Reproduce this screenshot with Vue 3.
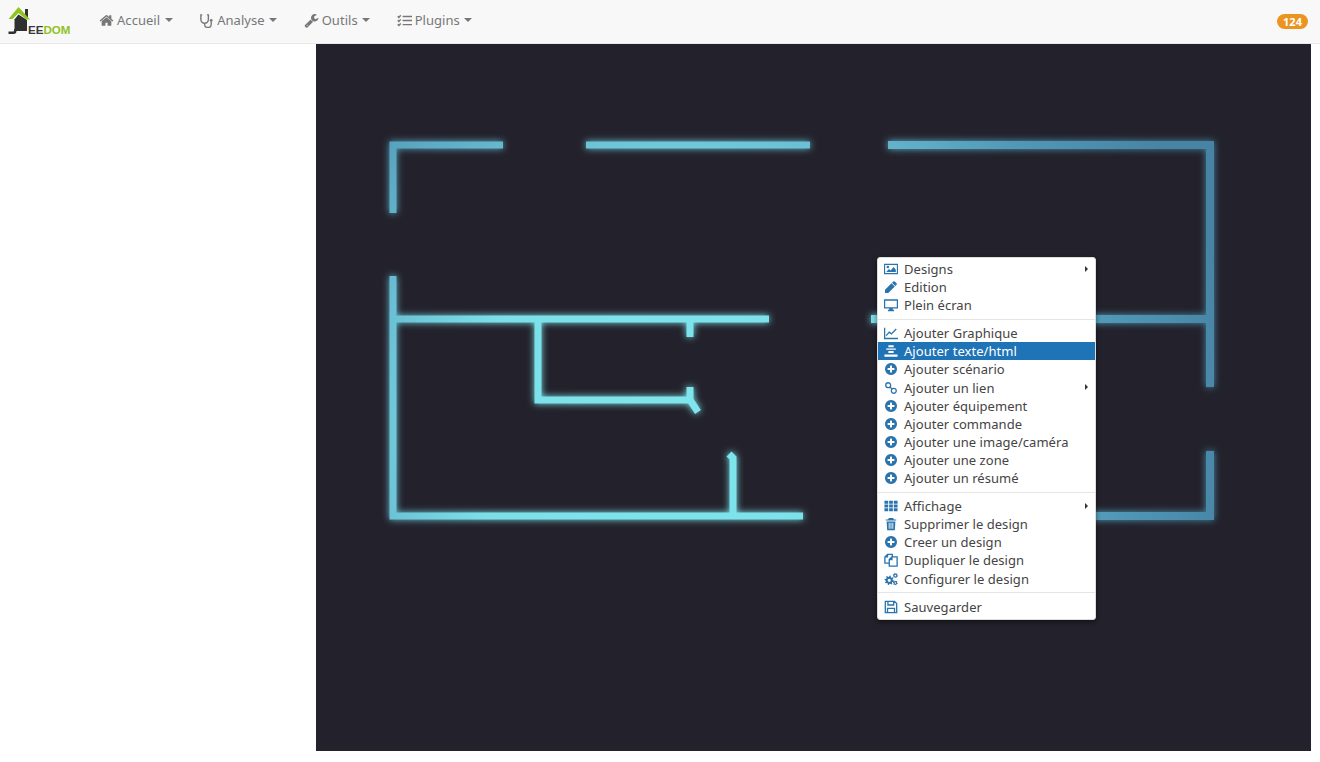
<template>
  <div class="page">
    <header class="navbar">
      <a class="logo">
        <svg width="72" height="36" viewBox="0 0 72 36">
          <rect x="25" y="9" width="3" height="8" fill="#2f3030" />
          <path d="M14 20l4.500-5.500 8.500 5.500v11H14z" fill="#2f3030" />
          <path d="M8.500 19L18.500 7 30 19.500h-3.500l-8-6.500-6 6z" fill="#8fc31f" />
          <path d="M14.500 20h2v11q0 3-3 3H8.500v-2.500h4q2 0 2-1.500z" fill="#2f3030" />
          <rect x="12.500" y="20" width="2" height="9" fill="#f8f8f8" />
          <text x="28" y="34" class="logo-text"><tspan fill="#3a3a3a">EE</tspan><tspan fill="#8fc31f">DOM</tspan></text>
        </svg>
      </a>
      <nav class="nav">
        <a v-for="item in navItems" :key="item.label" class="nav-link">
          <svg class="nav-icon" :viewBox="icons[item.icon].vb || '0 0 16 16'">
            <path v-if="icons[item.icon].fill" :d="icons[item.icon].fill" fill="currentColor" fill-rule="evenodd" />
            <path v-if="icons[item.icon].stroke" :d="icons[item.icon].stroke" fill="none" stroke="currentColor" stroke-width="1.500" />
          </svg>
          <span>{{ item.label }}</span>
          <i class="caret"></i>
        </a>
      </nav>
      <span class="badge">124</span>
    </header>

    <main class="content">
      <div class="side"></div>
      <section class="plan">
        <svg class="walls" viewBox="316 44 995 707" width="995" height="707">
          <defs>
            <radialGradient id="wall" gradientUnits="userSpaceOnUse" cx="680" cy="430" r="560">
              <stop offset="0" stop-color="#7fe6ee" />
              <stop offset="0.38" stop-color="#7bdfe8" />
              <stop offset="0.6" stop-color="#66b8cf" />
              <stop offset="0.78" stop-color="#5199b7" />
              <stop offset="1" stop-color="#4784a4" />
            </radialGradient>
            <filter id="glow" filterUnits="userSpaceOnUse" x="316" y="44" width="995" height="707">
              <feGaussianBlur in="SourceGraphic" stdDeviation="3.500" result="blur" />
              <feMerge>
                <feMergeNode in="blur" />
                <feMergeNode in="SourceGraphic" />
              </feMerge>
            </filter>
          </defs>
          <g filter="url(#glow)" fill="none" stroke="url(#wall)">
            <polyline v-for="(w, i) in walls" :key="i" :points="w" stroke-width="7" />
            <polyline v-for="(w, i) in wideWalls" :key="i" :points="w" stroke-width="8" />
          </g>
        </svg>

        <ul class="menu">
          <template v-for="(item, i) in menuItems" :key="i">
            <li v-if="item.sep" class="sep"></li>
            <li v-else class="menu-item" :class="{ active: item.active }">
              <svg class="menu-icon" :viewBox="icons[item.icon].vb || '0 0 16 16'">
                <path v-if="icons[item.icon].fill" :d="icons[item.icon].fill" fill="currentColor" fill-rule="evenodd" />
                <path v-if="icons[item.icon].stroke" :d="icons[item.icon].stroke" fill="none" stroke="currentColor" stroke-width="1.500" />
              </svg>
              <span>{{ item.label }}</span>
              <i v-if="item.sub" class="sub-arrow"></i>
            </li>
          </template>
        </ul>
      </section>
    </main>
  </div>
</template>

<script setup>
// petit engrenage : polygone a dents avec un trou au centre
const gear = (cx, cy, r, hole, teeth) => {
  const pts = [];
  const n = teeth * 4;
  for (let i = 0; i < n; i++) {
    const a = (i + 0.5) / n * Math.PI * 2;
    const rad = i % 4 < 2 ? r : r * 0.72;
    pts.push(`${(cx + Math.cos(a) * rad).toFixed(2)} ${(cy + Math.sin(a) * rad).toFixed(2)}`);
  }
  return `M${pts.join('L')}zM${cx - hole} ${cy}a${hole} ${hole} 0 1 0 ${hole * 2} 0a${hole} ${hole} 0 1 0 ${-hole * 2} 0z`;
};

const icons = {
  home: {
    vb: '0 0 1792 1792',
    fill: 'M1472 992v480q0 26-19 45t-45 19h-384v-384h-256v384h-384q-26 0-45-19t-19-45v-480q0-1 .5-3t.5-3l575-474 575 474q1 2 1 6zm223-69l-62 74q-8 9-21 11h-3q-13 0-21-7l-692-577-692 577q-12 8-24 7-13-2-21-11l-62-74q-8-10-7-23.500t11-21.500l719-599q32-26 76-26t76 26l244 204v-195q0-14 9-23t23-9h192q14 0 23 9t9 23v408l219 182q10 8 11 21.500t-7 23.500z'
  },
  wrench: {
    vb: '0 0 1792 1792',
    fill: 'M448 1472q0-26-19-45t-45-19-45 19-19 45 19 45 45 19 45-19 19-45zm644-420l-682 682q-37 37-90 37-52 0-91-37l-106-108q-38-36-38-90 0-53 38-91l681-681q39 98 114.500 173.500t173.500 114.500zm634-435q0 39-23 106-47 134-164.500 217.500t-258.500 83.500q-185 0-316.500-131.500t-131.500-316.500 131.500-316.500 316.500-131.500q58 0 121.500 16.500t107.500 46.500q16 11 16 28t-16 28l-293 169v224l193 107q5-3 79-48.500t135.500-81 70.500-35.500q15 0 23.500 10t8.500 25z'
  },
  pencil: {
    vb: '0 0 1792 1792',
    fill: 'M960 416l416 416-832 832h-416v-416zm683 96q0 53-37 90l-166 166-416-416 166-165q36-38 90-38 53 0 91 38l235 234q37 39 37 91z'
  },
  plus: {
    vb: '0 0 1792 1792',
    fill: 'M1344 960v-128q0-26-19-45t-45-19h-256v-256q0-26-19-45t-45-19h-128q-26 0-45 19t-19 45v256h-256q-26 0-45 19t-19 45v128q0 26 19 45t45 19h256v256q0 26 19 45t45 19h128q26 0 45-19t19-45v-256h256q26 0 45-19t19-45zm320-64q0 209-103 385.500t-279.500 279.500-385.500 103-385.500-103-279.500-279.500-103-385.500 103-385.500 279.500-279.500 385.500-103 385.500 103 279.500 279.500 103 385.500z'
  },
  stethoscope: {
    stroke: 'M3.500 2H2v5a4 4 0 0 0 8 0V2H8.500M6 11v1a3.500 3.500 0 0 0 7 0V9.500',
    fill: 'M11.500 8a1.500 1.500 0 1 0 3 0a1.500 1.500 0 1 0-3 0z'
  },
  tasks: {
    fill: 'M6 3h10v1.400H6zM6 7.300h10v1.400H6zM6 11.600h10V13H6z',
    stroke: 'M.8 3.500l1.200 1.200L4 2.500M.8 7.800L2 9l2-2.200M.8 12.100l1.200 1.200 2-2.200'
  },
  picture: {
    fill: 'M0 2h16v12H0zM1.300 3.300v9.400h13.400V3.300zM2.500 11.500l3.200-3.600 1.800 1.800L11 5.800l2.500 3v2.700zM3 5.600a1.400 1.400 0 1 0 2.800 0a1.400 1.400 0 1 0-2.800 0z'
  },
  desktop: {
    fill: 'M0 1.500h16V12H10v1.500h1.500V15h-7v-1.500H6V12H0zM1.400 3v7.500h13.200V3z'
  },
  chart: {
    stroke: 'M.7 2v12.300H16M2.500 11l3.500-4 2.500 2L14 3.500'
  },
  align: {
    fill: 'M5 1.500h6v2.200H5zM2.500 5h11v1.600h-11zM5 8h6v2.200H5zM.5 12h15v2.500H.5z'
  },
  link: {
    stroke: 'M2 4.800a2.800 2.800 0 1 0 5.600 0a2.800 2.800 0 1 0-5.600 0zM8.400 11.200a2.800 2.800 0 1 0 5.600 0a2.800 2.800 0 1 0-5.600 0zM6.500 6.500l3 3'
  },
  grid: {
    fill: 'M.5 2h4.300v3.300H.5zM5.900 2h4.200v3.300H5.900zM11.200 2h4.300v3.300h-4.300zM.5 6.400h4.300v3.200H.5zM5.900 6.400h4.200v3.200H5.900zM11.200 6.400h4.300v3.200h-4.300zM.5 10.700h4.300V14H.5zM5.900 10.700h4.200V14H5.900zM11.200 10.700h4.300V14h-4.300z'
  },
  trash: {
    fill: 'M5.500 1h5l.8 1.800H14V4H2V2.800h2.700zM3 5h10l-.6 10H3.600zM5.400 6.500v7h1v-7zM7.500 6.500v7h1v-7zM9.600 6.500v7h1v-7z'
  },
  copy: {
    stroke: 'M6 11.500H1V4.500l3-3h5.500v3M6 11.500V7.500l3-3h6v10.500H6zM4 1.500v3H1M9 4.500v3H6'
  },
  cogs: {
    fill: gear(6, 9.500, 5.500, 1.800, 8) + gear(13, 4, 3, 1, 6) + gear(13, 12.500, 2.800, 0.9, 6)
  },
  save: {
    stroke: 'M1.500 1.500H12l2.500 2.500v10.500h-13zM4.500 1.500v4.200h6.500V1.500M4 14.500V9.500h8v5'
  }
};

const navItems = [
  { label: 'Accueil', icon: 'home' },
  { label: 'Analyse', icon: 'stethoscope' },
  { label: 'Outils', icon: 'wrench' },
  { label: 'Plugins', icon: 'tasks' }
];

const menuItems = [
  { label: 'Designs', icon: 'picture', sub: true },
  { label: 'Edition', icon: 'pencil' },
  { label: 'Plein écran', icon: 'desktop' },
  { sep: true },
  { label: 'Ajouter Graphique', icon: 'chart' },
  { label: 'Ajouter texte/html', icon: 'align', active: true },
  { label: 'Ajouter scénario', icon: 'plus' },
  { label: 'Ajouter un lien', icon: 'link', sub: true },
  { label: 'Ajouter équipement', icon: 'plus' },
  { label: 'Ajouter commande', icon: 'plus' },
  { label: 'Ajouter une image/caméra', icon: 'plus' },
  { label: 'Ajouter une zone', icon: 'plus' },
  { label: 'Ajouter un résumé', icon: 'plus' },
  { sep: true },
  { label: 'Affichage', icon: 'grid', sub: true },
  { label: 'Supprimer le design', icon: 'trash' },
  { label: 'Creer un design', icon: 'plus' },
  { label: 'Dupliquer le design', icon: 'copy' },
  { label: 'Configurer le design', icon: 'cogs' },
  { sep: true },
  { label: 'Sauvegarder', icon: 'save' }
];

// murs du plan, en coordonnees de la page
const walls = [
  '393,213 393,145 503,145',
  '586,145 810,145',
  '393,276 393,516 803,516',
  '393,319 769,319',
  '538,319 538,400 691,400',
  '690,319 690,337',
  '690,387 690,400 698,412',
  '733,516 733,458 729,454'
];

const wideWalls = [
  '888,145 1210,145 1210,387',
  '1210,451 1210,516 1090,516',
  '871,319 1210,319'
];
</script>

<style scoped>
.page {
  font-family: "Noto Sans", sans-serif;
  font-size: 13px;
  letter-spacing: 0.04px;
  color: #444;
}
.navbar {
  height: 43px;
  display: flex;
  align-items: flex-start;
  background: #f8f8f8;
  border-bottom: 1px solid #e7e7e7;
}
.logo {
  width: 84px;
  flex: none;
}
.logo svg {
  display: block;
}
.logo-text {
  font-family: "Liberation Sans", sans-serif;
  font-weight: 700;
  font-size: 11.600px;
  letter-spacing: 0;
}
.nav {
  display: flex;
}
.nav-link {
  display: flex;
  align-items: center;
  height: 40px;
  padding: 0 11.500px 0 15px;
  color: #777;
}
.nav-icon {
  width: 15px;
  height: 15px;
  margin-right: 3px;
}
.caret {
  width: 0;
  height: 0;
  margin-left: 4.500px;
  border-top: 4px solid #777;
  border-left: 4px solid transparent;
  border-right: 4px solid transparent;
}
.badge {
  margin: 14px 12px 0 auto;
  height: 15px;
  padding: 0 6px;
  border-radius: 8px;
  background: #ec9420;
  color: #fff;
  font-size: 11px;
  font-weight: 700;
  line-height: 15px;
}
.content {
  display: flex;
}
.side {
  width: 316px;
  flex: none;
}
.plan {
  position: relative;
  width: 995px;
  height: 707px;
  background: #23222c;
}
.walls {
  display: block;
}
.menu {
  position: absolute;
  left: 561px;
  top: 213px;
  width: 219px;
  box-sizing: border-box;
  margin: 0;
  padding: 1.800px 0 3px;
  list-style: none;
  background: #fff;
  border: 1px solid #ddd;
  border-radius: 3px;
  box-shadow: 0 2px 5px rgba(0, 0, 0, 0.5);
}
.menu-item {
  position: relative;
  display: flex;
  align-items: center;
  height: 18.120px;
  padding-left: 6px;
  color: #444;
}
.menu-item.active {
  background: #1f73b7;
  color: #fff;
}
.menu-icon {
  width: 14px;
  height: 14px;
  margin-right: 6px;
  color: #2a74ad;
  flex: none;
}
.menu-item.active .menu-icon {
  color: #fff;
}
.sep {
  height: 1px;
  margin: 4.500px 0;
  background: #e6e6e6;
}
.sub-arrow {
  position: absolute;
  right: 7px;
  top: 6px;
  width: 0;
  height: 0;
  border-left: 3px solid #333;
  border-top: 3px solid transparent;
  border-bottom: 3px solid transparent;
}
</style>
